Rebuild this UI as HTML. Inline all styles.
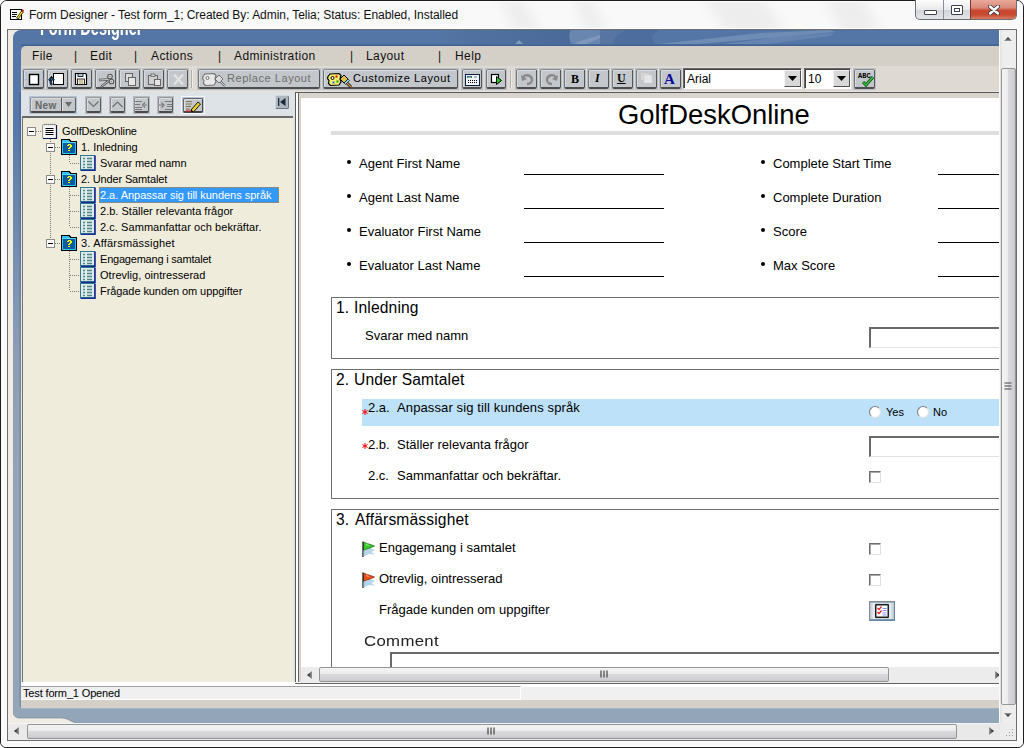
<!DOCTYPE html>
<html><head><meta charset="utf-8">
<style>
*{margin:0;padding:0;box-sizing:border-box}
html,body{width:1024px;height:748px;overflow:hidden;background:#fff}
body{position:relative;font-family:"Liberation Sans",sans-serif;color:#000}
.a{position:absolute}
.t{position:absolute;white-space:pre;line-height:1}
</style></head><body>
<!-- window frame -->
<div class="a" id="win" style="left:0;top:0;width:1024px;height:748px;background:#f9f9f9;border:1px solid #1e1e1e;border-radius:7px 7px 6px 6px"></div>
<div class="a" style="left:1px;top:1px;width:1022px;height:746px;border:1px solid #fbfbfb;border-radius:6px 6px 5px 5px"></div>
<svg class="a" style="left:2px;top:2px" width="1020" height="26"><defs><filter id="bl" x="-50%" y="-50%" width="200%" height="200%"><feGaussianBlur stdDeviation="6"/></filter></defs><g filter="url(#bl)" fill="#e0e0e0" opacity="0.45"><path d="M495 -5 L520 -5 L540 31 L515 31Z"/><path d="M570 -5 L590 -5 L605 31 L585 31Z"/><path d="M700 -5 L760 -5 L785 31 L725 31Z"/><path d="M820 -5 L860 -5 L880 31 L840 31Z"/></g></svg>
<!-- title icon -->
<svg class="a" style="left:10px;top:8px" width="14" height="13" viewBox="0 0 14 13"><rect x="0.5" y="1.5" width="11" height="10" fill="#fff" stroke="#000"/><path d="M2 4.5h5M2 6.5h5M2 8.5h4" stroke="#000" stroke-width="1"/><path d="M6.5 10 L11.5 3 L13.2 4.2 L8.2 11 Z" fill="#f5e400" stroke="#000" stroke-width="0.7"/><path d="M11.5 3 L12.6 1.3 L14 2.4 L13.2 4.2Z" fill="#c01010"/></svg>
<div class="t" style="left:29px;top:9px;font-size:12px;color:#111;letter-spacing:-0.05px">Form Designer - Test form_1; Created By: Admin, Telia; Status: Enabled, Installed</div>
<!-- caption buttons -->
<div class="a" style="left:915px;top:0;width:102px;height:20px;border:1px solid #6b6f78;border-top:none;border-radius:0 0 5px 5px;overflow:hidden;background:linear-gradient(#fdfdfd,#e9e9ec 50%,#d3d5da 51%,#e1e3e7)">
  <div class="a" style="left:27px;top:0;width:1px;height:19px;background:#8a8e96"></div>
  <div class="a" style="left:54px;top:0;width:47px;height:19px;background:linear-gradient(#e9a89c,#dc8a7a 40%,#c84a30 55%,#c6472e 75%,#d77a5e);border-left:1px solid #7b3a30"></div>
  <div class="a" style="left:8px;top:10px;width:13px;height:5px;border:1px solid #3e4350;border-radius:1px;background:#fff"></div>
  <div class="a" style="left:35px;top:5px;width:12px;height:10px;border:1px solid #3e4350;border-radius:1px;background:#fff"></div>
  <div class="a" style="left:38px;top:8px;width:6px;height:4px;border:1px solid #3e4350;background:#fff"></div>
  <svg class="a" style="left:72px;top:5px" width="12" height="10" viewBox="0 0 12 10"><path d="M2 1.5 L10 8.5 M10 1.5 L2 8.5" stroke="#3a3a48" stroke-width="4.2" stroke-linecap="round"/><path d="M2 1.5 L10 8.5 M10 1.5 L2 8.5" stroke="#fff" stroke-width="2.4" stroke-linecap="round"/></svg>
</div>
<!-- client frame -->
<div class="a" style="left:7px;top:28px;width:1011px;height:1px;background:#fff"></div>
<div class="a" style="left:7px;top:29px;width:1010px;height:712px;border:1px solid #6d6d6d;background:#f0ece4"></div>

<!-- blue panel -->
<div class="a" id="bluepanel" style="left:13px;top:30px;width:986px;height:693px;background:linear-gradient(#5476a6 0px,#5677a8 90px,#6a86ab 170px,#8c9db5 320px,#93a5b9 470px);border-radius:8px 0 0 0"></div>
<svg class="a" style="left:13px;top:708px" width="70" height="15" viewBox="0 0 70 15"><path d="M0 4 A6 6 0 0 0 6 10 L48 10 C56 10 58 15 66 15 L70 15 L70 16 L0 16 Z" fill="#f0ece4"/><path d="M0 4 A6 6 0 0 0 6 10 L48 10 C56 10 58 15 66 15" fill="none" stroke="#7d8b9c" stroke-width="1" opacity="0.7"/></svg>
<div class="a" style="left:36px;top:30px;width:130px;height:10px;overflow:hidden"><div class="t" style="left:4px;top:-12.6px;font-size:22px;font-weight:bold;color:#fff;transform:scaleX(0.66);transform-origin:0 0">Form Designer</div></div>

<div class="a" style="left:19px;top:92px;width:2px;height:615px;background:linear-gradient(90deg,rgba(20,30,60,0.08),rgba(20,30,60,0.2))"></div>
<svg class="a" style="left:430px;top:30px" width="410" height="15" viewBox="-70 0 410 15"><defs><linearGradient id="dk" x1="0" x2="1"><stop offset="0" stop-color="#000" stop-opacity="0"/><stop offset="1" stop-color="#001040" stop-opacity="0.12"/></linearGradient></defs><rect x="-70" y="0" width="140" height="15" fill="url(#dk)"/><path d="M100 0 L160 0 C150 5 150 10 158 15 L100 15Z" fill="#001040" opacity="0.08"/><path d="M14 15 L19 10 L24 15Z" fill="#fff" opacity="0.3"/><path d="M71 0 C67 5 69 12 74 15 L100 15 L100 0Z" fill="#fff" opacity="0.12"/><path d="M74 13 L100 5 L100 8 L84 15Z" fill="#fff" opacity="0.15"/><path d="M100 0 L125 0 C115 6 112 10 115 15 L100 15Z" fill="#fff" opacity="0.06"/><path d="M150 15 L260 3 L330 0 L335 2 L270 8 L185 15Z" fill="#fff" opacity="0.16"/><path d="M215 15 L290 6 L335 3 L330 6 L260 15Z" fill="#fff" opacity="0.1"/></svg>
<!-- menu bar -->
<div class="a" style="left:21px;top:44px;width:978px;height:2px;background:linear-gradient(#4d6d9f,#3f5f90)"></div>
<div class="a" style="left:21px;top:46px;width:978px;height:20px;background:#d4d0c8;border-radius:5px 0 0 0"></div>
<div class="a" id="menu" style="left:21px;top:50px;font-size:12px;letter-spacing:0.4px;color:#111">
<span class="t" style="left:11px">File</span><span class="t" style="left:53px">|</span>
<span class="t" style="left:69px">Edit</span><span class="t" style="left:113px">|</span>
<span class="t" style="left:130px">Actions</span><span class="t" style="left:197px">|</span>
<span class="t" style="left:213px">Administration</span><span class="t" style="left:329px">|</span>
<span class="t" style="left:345px">Layout</span><span class="t" style="left:417px">|</span>
<span class="t" style="left:434px">Help</span>
</div>
<!-- toolbar -->
<div class="a" style="left:21px;top:66px;width:978px;height:26px;background:linear-gradient(#dedad3,#dedad3 25px,#e6e3dd 25px)"></div>
<style>
.b{position:absolute;top:68px;width:23px;height:22px;border:1px solid #b7bfc7}
.b>i{position:absolute;left:0;top:0;right:0;bottom:0;border:1px solid #6c6c6c;border-color:#8a8a8a #555 #4e4e4e #777;border-bottom-width:2px;border-radius:2px;background:#c3c7cb;box-shadow:inset 1px 1px 0 #d9dcdf}
.b>svg{position:absolute;left:2px;top:2px}
.sep{position:absolute;top:70px;width:2px;height:18px;border-left:1px solid #b4b2ac;border-right:1px solid #ecebe6}
</style>
<div class="b" style="left:22px"><i></i><svg style="left:0px" width="22" height="19" viewBox="0 0 22 19"><rect x="6.5" y="3.5" width="9" height="10" fill="#fff" stroke="#000" stroke-width="1.4"/><path d="M2 1l2.5 2.5M1.5 8.5h3M2 16l2.5-2.5M20 1l-2.5 2.5M20.5 8.5h-3M20 16l-2.5-2.5" stroke="#9cc0e8" stroke-width="1"/></svg></div>
<div class="b" style="left:46px"><i></i><svg style="left:0px" width="19" height="17" viewBox="0 0 19 17"><rect x="6.5" y="2.5" width="10" height="11" fill="#fff" stroke="#000"/><path d="M5 14 C3 12 4 9 4.5 8 M2 9.5 L4.5 6.5 L7 9.5" fill="none" stroke="#000" stroke-width="2"/><path d="M5 14 C3 12 4 9 4.5 8 M2.5 9 L4.5 7 L6.5 9" fill="none" stroke="#1a6fb0" stroke-width="1"/></svg></div>
<div class="b" style="left:70px"><i></i><svg style="left:0px" width="19" height="17" viewBox="0 0 19 17"><path d="M4.5 2.5h10l1 1v10h-11z" fill="#fff" stroke="#000" stroke-width="1.2"/><rect x="7" y="2.5" width="5" height="3" fill="#a8c8e0" stroke="#000" stroke-width="0.8"/><rect x="6.5" y="8" width="7" height="5.5" fill="#f0ead0" stroke="#000" stroke-width="0.8"/><path d="M8 10h4M8 12h4" stroke="#9a8a50" stroke-width="0.8"/></svg></div>
<div class="b" style="left:94px"><i></i><svg width="19" height="17" viewBox="0 0 19 17"><path d="M2 9 L11 8.5 M4 16 L12 9.5" stroke="#5a5a5a" stroke-width="2.4"/><path d="M2.5 9 L11 8.5 M4.5 15.5 L12 9.5" stroke="#d8d8d8" stroke-width="0.9"/><circle cx="13" cy="5.5" r="2.3" fill="#dcdcdc" stroke="#5a5a5a" stroke-width="1.1"/><circle cx="14.5" cy="10.5" r="2.3" fill="#dcdcdc" stroke="#5a5a5a" stroke-width="1.1"/><circle cx="13" cy="5.5" r="0.8" fill="#8a8a8a"/><circle cx="14.5" cy="10.5" r="0.8" fill="#8a8a8a"/></svg></div>
<div class="b" style="left:118px"><i></i><svg width="19" height="17" viewBox="0 0 19 17"><rect x="4.5" y="2.5" width="7" height="8" fill="#d8d8d8" stroke="#666"/><rect x="7.5" y="6.5" width="7" height="8" fill="#e6e6e6" stroke="#666"/></svg></div>
<div class="b" style="left:142px"><i></i><svg width="19" height="17" viewBox="0 0 19 17"><rect x="3.5" y="4.5" width="9" height="9" fill="#d0d0d0" stroke="#666"/><rect x="6" y="3" width="4" height="2.5" fill="#d0d0d0" stroke="#666" stroke-width="0.8"/><rect x="9.5" y="8.5" width="6" height="6" fill="#e6e6e6" stroke="#666"/></svg></div>
<div class="b" style="left:166px"><i></i><svg width="19" height="17" viewBox="0 0 19 17"><path d="M5 3.5 L14 13.5 M14 3.5 L5 13.5" stroke="#e2e2e2" stroke-width="2.4"/></svg></div>
<div class="sep" style="left:191px"></div>
<div class="b" style="left:197px;width:124px"><i></i><svg width="26" height="16" viewBox="0 0 26 16" style="left:3px;top:3px"><path d="M2 4.5 L4 2 L13 1.5 L15 3.5 L14 7 L15 10 L13 13 L4.5 13.5 L2.5 11.5 L3 8.5 L1.5 6.5 Z" fill="#e8e8e8" stroke="#707070" stroke-width="1.1"/><circle cx="6.5" cy="6" r="1.5" fill="#fff" stroke="#707070" stroke-width="1"/><path d="M14 7 L18 3 L22 7 L18 11 Z" fill="#dcdcdc" stroke="#707070" stroke-width="1"/><path d="M19.5 9.5 L24 14" stroke="#707070" stroke-width="2.2"/><path d="M19.5 9.5 L24 14" stroke="#d8d8d8" stroke-width="0.9"/></svg><span class="t" style="left:29px;top:4px;font-size:11px;letter-spacing:0.55px;color:#6e6e6e">Replace Layout</span></div>
<div class="b" style="left:322px;width:137px"><i></i><svg width="26" height="16" viewBox="0 0 26 16" style="left:3px;top:3px"><path d="M2 4.5 L4 2 L13 1.5 L15 3.5 L14 7 L15 10 L13 13 L4.5 13.5 L2.5 11.5 L3 8.5 L1.5 6.5 Z" fill="#f6ec6a" stroke="#000" stroke-width="1.2"/><circle cx="6.5" cy="6" r="1.5" fill="#fff" stroke="#000" stroke-width="1"/><rect x="9.5" y="3.5" width="2" height="2" fill="#e00000"/><rect x="10.5" y="8.5" width="2" height="2" fill="#00a000"/><rect x="6.5" y="9.5" width="2" height="2" fill="#2070f0"/><path d="M14 7 L18 3 L22 7 L18 11 Z" fill="#e0c040" stroke="#000" stroke-width="1"/><path d="M18 11 L22 7 L23.5 8.5 L19.5 12.5Z" fill="#80d0f0" stroke="#000" stroke-width="0.6"/><path d="M21 11 L25 15" stroke="#000" stroke-width="2.6"/><path d="M21 11 L25 15" stroke="#d09040" stroke-width="1.4"/></svg><span class="t" style="left:30px;top:4px;font-size:11px;letter-spacing:0.6px;color:#000">Customize Layout</span></div>
<div class="b" style="left:461px;width:22px"><i></i><svg width="18" height="17" viewBox="0 0 18 17" shape-rendering="crispEdges"><rect x="1.5" y="3.5" width="14" height="11" rx="1" fill="#f0f4f8" stroke="#102040"/><rect x="3" y="5" width="5" height="2" fill="#3a6ab0"/><rect x="4" y="5.5" width="3" height="1" fill="#80d070"/><rect x="10" y="5" width="3" height="2" fill="#a8b8d0"/><g fill="#000"><rect x="4" y="9" width="1" height="1"/><rect x="6" y="9" width="1" height="1"/><rect x="8" y="9" width="1" height="1"/><rect x="10" y="9" width="1" height="1"/><rect x="12" y="9" width="1" height="1"/><rect x="4" y="11" width="1" height="1"/><rect x="6" y="11" width="1" height="1"/><rect x="8" y="11" width="1" height="1"/><rect x="10" y="11" width="1" height="1"/><rect x="12" y="11" width="1" height="1"/></g></svg></div>
<div class="b" style="left:485px;width:22px"><i></i><svg width="18" height="17" viewBox="0 0 18 17"><rect x="3.5" y="3.5" width="7" height="8" fill="#fff" stroke="#000" stroke-width="1.2"/><path d="M8.5 5.5 L13.5 9.5 L8.5 13.5Z" fill="#10d010" stroke="#000" stroke-width="1"/></svg></div>
<div class="sep" style="left:510px"></div>
<div class="b" style="left:515px"><i></i><svg width="19" height="17" viewBox="0 0 19 17"><path d="M5 6 C8 3 14 4 14 9 C14 12 11 13 9 13" fill="none" stroke="#8a8a8a" stroke-width="2.4"/><path d="M3 4 L4 10 L9 8Z" fill="#8a8a8a"/></svg></div>
<div class="b" style="left:539px"><i></i><svg width="19" height="17" viewBox="0 0 19 17"><path d="M14 6 C11 3 5 4 5 9 C5 12 8 13 10 13" fill="none" stroke="#8a8a8a" stroke-width="2.4"/><path d="M16 4 L15 10 L10 8Z" fill="#8a8a8a"/></svg></div>
<div class="b" style="left:563px"><i></i><span class="t" style="left:7px;top:3px;font:bold 12px 'Liberation Serif',serif">B</span></div>
<div class="b" style="left:587px"><i></i><span class="t" style="left:7px;top:2px;font:italic bold 12px 'Liberation Serif',serif">I</span></div>
<div class="b" style="left:611px"><i></i><span class="t" style="left:5px;top:2px;font:bold 12px 'Liberation Serif',serif;text-decoration:underline">U</span></div>
<div class="b" style="left:635px"><i></i><svg width="19" height="17" viewBox="0 0 19 17"><rect x="3" y="2" width="8" height="7" fill="#d6d6d6"/><rect x="6" y="4" width="8" height="8" fill="#e6e6e6" stroke="#cfcfcf" stroke-width="0.5"/></svg></div>
<div class="b" style="left:659px"><i></i><span class="t" style="left:4px;top:2px;font:bold 15px 'Liberation Serif',serif;color:#0a0a9a">A</span></div>
<!-- font combo -->
<div class="a" style="left:683px;top:68px;width:119px;height:21px;background:#fff;border:1px solid;border-color:#6a6a6a #fff #fff #6a6a6a;box-shadow:inset 1px 1px 0 #404040"></div>
<span class="t" style="left:687px;top:73px;font-size:12px">Arial</span>
<div class="a" style="left:784px;top:70px;width:17px;height:17px;background:#d8d8d8;border:1px solid;border-color:#f4f4f4 #505050 #505050 #f4f4f4"></div>
<svg class="a" style="left:788px;top:76px" width="9" height="5"><path d="M0 0h9L4.5 5z" fill="#000"/></svg>
<div class="a" style="left:804px;top:68px;width:47px;height:21px;background:#fff;border:1px solid;border-color:#6a6a6a #fff #fff #6a6a6a;box-shadow:inset 1px 1px 0 #404040"></div>
<span class="t" style="left:808px;top:73px;font-size:12px">10</span>
<div class="a" style="left:833px;top:70px;width:17px;height:17px;background:#d8d8d8;border:1px solid;border-color:#f4f4f4 #505050 #505050 #f4f4f4"></div>
<svg class="a" style="left:837px;top:76px" width="9" height="5"><path d="M0 0h9L4.5 5z" fill="#000"/></svg>
<div class="b" style="left:853px"><i></i><svg width="19" height="17" viewBox="0 0 19 17"><text x="2" y="7" font-family="Liberation Mono" font-weight="bold" font-size="7" fill="#000">ABC</text><path d="M7 11 L10 14 L17 6" fill="none" stroke="#104010" stroke-width="3"/><path d="M7 11 L10 14 L17 6" fill="none" stroke="#30c040" stroke-width="1.6"/></svg></div>


<!-- left pane -->
<div class="a" style="left:21px;top:92px;width:274px;height:592px;background:#dee3e7"></div>
<div class="a" style="left:22px;top:116px;width:271px;height:566px;background:#f0ecdc;border-top:2px solid #6a6a6a;border-left:1px solid #747474"></div>
<style>
.pb{position:absolute;border:1px solid #6a6a6a;border-color:#9a9a9a #5a5a5a #4a4a4a #8a8a8a;border-bottom-width:2px;border-radius:2px;background:#c3c7cb;box-shadow:inset 1px 1px 0 #dadde0}
</style>
<div class="a" style="left:29px;top:96px;width:48px;height:18px;background:#b4c4d4"></div>
<div class="pb" style="left:30px;top:97px;width:46px;height:16px"></div>
<div class="a" style="left:61px;top:98px;width:2px;height:13px;border-left:1px solid #555;border-right:1px solid #e0e0e0"></div>
<span class="t" style="left:35px;top:100px;font:bold 10px 'Liberation Sans',sans-serif;color:#666;letter-spacing:0.3px">New</span>
<svg class="a" style="left:65px;top:102px" width="7" height="5"><path d="M0 0h7L3.5 5z" fill="#6a6a6a"/></svg>
<div class="a" style="left:85px;top:96px;width:17px;height:18px;background:#b8bcc0"></div>
<div class="pb" style="left:86px;top:97px;width:15px;height:16px"></div>
<svg class="a" style="left:88px;top:101px" width="11" height="7"><path d="M0.5 0.5L5.5 5.5L10.5 0.5" fill="none" stroke="#707070" stroke-width="1.2"/></svg>
<div class="a" style="left:109px;top:96px;width:17px;height:18px;background:#b8bcc0"></div>
<div class="pb" style="left:110px;top:97px;width:15px;height:16px"></div>
<svg class="a" style="left:112px;top:101px" width="11" height="7"><path d="M0.5 6L5.5 1L10.5 6" fill="none" stroke="#707070" stroke-width="1.2"/></svg>
<div class="a" style="left:133px;top:96px;width:17px;height:18px;background:#b8bcc0"></div>
<div class="pb" style="left:134px;top:97px;width:15px;height:16px"></div>
<svg class="a" style="left:135px;top:100px" width="13" height="10"><path d="M0 1.5h7M0 4.5h5M0 7.5h7M0 9.5h7" stroke="#7a7a7a"/><path d="M12 5h-3M10 2.5L7.5 5L10 7.5" fill="none" stroke="#7a7a7a" stroke-width="1.2"/></svg>
<div class="a" style="left:157px;top:96px;width:17px;height:18px;background:#b8bcc0"></div>
<div class="pb" style="left:158px;top:97px;width:15px;height:16px"></div>
<svg class="a" style="left:159px;top:100px" width="13" height="10"><path d="M6 1.5h7M8 4.5h5M8 6.5h5M6 9.5h7" stroke="#7a7a7a"/><path d="M0 5h4M2.5 2.5L5 5L2.5 7.5" fill="none" stroke="#7a7a7a" stroke-width="1.2"/></svg>
<div class="a" style="left:181px;top:96px;width:24px;height:18px;background:#b4c4d4;border:1px solid #f4f8fc"></div>
<div class="pb" style="left:183px;top:98px;width:20px;height:15px;border-color:#666 #444 #444 #666"></div>
<svg class="a" style="left:185px;top:99px" width="17" height="13" viewBox="0 0 17 13"><path d="M1 2.5h6M1 5h6M1 7.5h5M1 10h4" stroke="#8a7a50" stroke-width="1"/><path d="M1 12h5" stroke="#e02020" stroke-width="1.2"/><path d="M6 11 L13 3 L15.5 5 L8.5 13 Z" fill="#f0d030" stroke="#000" stroke-width="0.9"/><path d="M6 11 L6.5 13 L8.5 13Z" fill="#000"/></svg>
<div class="a" style="left:275px;top:95px;width:14px;height:14px;background:#aeb6be;border:1px solid;border-color:#d0d6dc #6a727a #6a727a #d0d6dc;border-radius:2px 3px 2px 2px"></div>
<svg class="a" style="left:278px;top:98px" width="8" height="8"><path d="M0.5 0v8" stroke="#1a2a3a" stroke-width="1.6"/><path d="M7.5 0L2 4L7.5 8z" fill="#1a2a3a"/></svg>

<style>
.mb{position:absolute;width:9px;height:9px;border:1px solid #8c8c8c;background:#fcfcfc}
.mb:after{content:"";position:absolute;left:1px;top:3px;width:5px;height:1px;background:#000}
.dh{position:absolute;height:1px;background-image:linear-gradient(90deg,#7c7c7c 50%,transparent 50%);background-size:2px 1px}
.dv{position:absolute;width:1px;background-image:linear-gradient(#7c7c7c 50%,transparent 50%);background-size:1px 2px}
.tt{position:absolute;white-space:pre;line-height:1;font-size:11px;color:#000;letter-spacing:-0.15px}
</style>
<div class="dv" style="left:50px;top:139px;height:100px"></div>
<div class="dv" style="left:69px;top:155px;height:8px"></div>
<div class="dv" style="left:69px;top:187px;height:40px"></div>
<div class="dv" style="left:69px;top:251px;height:40px"></div>
<div class="mb" style="left:27px;top:127px"></div>
<div class="dh" style="left:36px;top:131px;width:6px"></div>
<svg class="a" style="left:42px;top:123px" width="16" height="16" viewBox="0 0 16 16"><rect x="0.5" y="1.5" width="14" height="14" rx="1.5" fill="#f6f6f6" stroke="#9a9a9a"/><path d="M14.5 2 V15.5 H1" fill="none" stroke="#0a1a4a" stroke-width="1.2"/><path d="M2 1.5h11" stroke="#888" stroke-width="1.6" stroke-dasharray="1 1"/><path d="M3.5 5.5h8M3.5 7.5h8M3.5 9.5h8M3.5 11.5h8" stroke="#000" stroke-width="1"/></svg>
<div class="tt" style="left:62px;top:126px;letter-spacing:-0.158px">GolfDeskOnline</div>
<div class="mb" style="left:46px;top:143px"></div>
<div class="dh" style="left:55px;top:147px;width:6px"></div>
<svg class="a" style="left:61px;top:139px" width="16" height="16" viewBox="0 0 16 16" shape-rendering="crispEdges"><path d="M0 0h8l2 2h6v14H0z" fill="#000"/><path d="M1 1h6.5l2 2H15v12H1z" fill="#2ec4f6"/><rect x="2" y="4" width="12" height="10" fill="#0a5c9c"/><rect x="1" y="3" width="14" height="1" fill="#5ad4fa"/><g fill="#ffff00"><rect x="7" y="5" width="1" height="1"/><rect x="8" y="5" width="1" height="1"/><rect x="9" y="5" width="1" height="1"/><rect x="6" y="6" width="1" height="1"/><rect x="7" y="6" width="1" height="1"/><rect x="9" y="6" width="1" height="1"/><rect x="10" y="6" width="1" height="1"/><rect x="9" y="7" width="1" height="1"/><rect x="10" y="7" width="1" height="1"/><rect x="8" y="8" width="1" height="1"/><rect x="9" y="8" width="1" height="1"/><rect x="7" y="9" width="1" height="1"/><rect x="8" y="9" width="1" height="1"/><rect x="7" y="11" width="1" height="1"/><rect x="8" y="11" width="1" height="1"/></g></svg>
<div class="tt" style="left:81px;top:142px;letter-spacing:-0.023px">1. Inledning</div>
<div class="dh" style="left:70px;top:163px;width:10px"></div>
<svg class="a" style="left:80px;top:155px" width="16" height="16" viewBox="0 0 16 16"><rect x="0.5" y="0.5" width="14" height="14" fill="#e2e8e6" stroke="#2a7a8a"/><path d="M15 0.5V15.5H0.5" fill="none" stroke="#1a2a9a" stroke-width="1.6"/><path d="M3 3.5h2M7 3.5h5M3 6.5h2M7 6.5h5M3 9.5h2M7 9.5h5M3 12.5h2M7 12.5h5" stroke="#4a8a8a" stroke-width="1.3"/></svg>
<div class="tt" style="left:100px;top:158px;letter-spacing:-0.064px">Svarar med namn</div>
<div class="mb" style="left:46px;top:175px"></div>
<div class="dh" style="left:55px;top:179px;width:6px"></div>
<svg class="a" style="left:61px;top:171px" width="16" height="16" viewBox="0 0 16 16" shape-rendering="crispEdges"><path d="M0 0h8l2 2h6v14H0z" fill="#000"/><path d="M1 1h6.5l2 2H15v12H1z" fill="#2ec4f6"/><rect x="2" y="4" width="12" height="10" fill="#0a5c9c"/><rect x="1" y="3" width="14" height="1" fill="#5ad4fa"/><g fill="#ffff00"><rect x="7" y="5" width="1" height="1"/><rect x="8" y="5" width="1" height="1"/><rect x="9" y="5" width="1" height="1"/><rect x="6" y="6" width="1" height="1"/><rect x="7" y="6" width="1" height="1"/><rect x="9" y="6" width="1" height="1"/><rect x="10" y="6" width="1" height="1"/><rect x="9" y="7" width="1" height="1"/><rect x="10" y="7" width="1" height="1"/><rect x="8" y="8" width="1" height="1"/><rect x="9" y="8" width="1" height="1"/><rect x="7" y="9" width="1" height="1"/><rect x="8" y="9" width="1" height="1"/><rect x="7" y="11" width="1" height="1"/><rect x="8" y="11" width="1" height="1"/></g></svg>
<div class="tt" style="left:81px;top:174px;letter-spacing:-0.15px">2. Under Samtalet</div>
<div class="dh" style="left:70px;top:195px;width:10px"></div>
<svg class="a" style="left:80px;top:187px" width="16" height="16" viewBox="0 0 16 16"><rect x="0.5" y="0.5" width="14" height="14" fill="#e2e8e6" stroke="#2a7a8a"/><path d="M15 0.5V15.5H0.5" fill="none" stroke="#1a2a9a" stroke-width="1.6"/><path d="M3 3.5h2M7 3.5h5M3 6.5h2M7 6.5h5M3 9.5h2M7 9.5h5M3 12.5h2M7 12.5h5" stroke="#4a8a8a" stroke-width="1.3"/></svg>
<div class="a" style="left:99px;top:187px;width:180px;height:16px;background:#3399ff;outline:1px dotted #d08020;outline-offset:-1px"></div>
<div class="tt" style="left:100px;top:190px;color:#fff;letter-spacing:-0.027px">2.a. Anpassar sig till kundens språk</div>
<div class="dh" style="left:70px;top:211px;width:10px"></div>
<svg class="a" style="left:80px;top:203px" width="16" height="16" viewBox="0 0 16 16"><rect x="0.5" y="0.5" width="14" height="14" fill="#e2e8e6" stroke="#2a7a8a"/><path d="M15 0.5V15.5H0.5" fill="none" stroke="#1a2a9a" stroke-width="1.6"/><path d="M3 3.5h2M7 3.5h5M3 6.5h2M7 6.5h5M3 9.5h2M7 9.5h5M3 12.5h2M7 12.5h5" stroke="#4a8a8a" stroke-width="1.3"/></svg>
<div class="tt" style="left:100px;top:206px;letter-spacing:0.018px">2.b. Ställer relevanta frågor</div>
<div class="dh" style="left:70px;top:227px;width:10px"></div>
<svg class="a" style="left:80px;top:219px" width="16" height="16" viewBox="0 0 16 16"><rect x="0.5" y="0.5" width="14" height="14" fill="#e2e8e6" stroke="#2a7a8a"/><path d="M15 0.5V15.5H0.5" fill="none" stroke="#1a2a9a" stroke-width="1.6"/><path d="M3 3.5h2M7 3.5h5M3 6.5h2M7 6.5h5M3 9.5h2M7 9.5h5M3 12.5h2M7 12.5h5" stroke="#4a8a8a" stroke-width="1.3"/></svg>
<div class="tt" style="left:100px;top:222px;letter-spacing:0.06px">2.c. Sammanfattar och bekräftar.</div>
<div class="mb" style="left:46px;top:239px"></div>
<div class="dh" style="left:55px;top:243px;width:6px"></div>
<svg class="a" style="left:61px;top:235px" width="16" height="16" viewBox="0 0 16 16" shape-rendering="crispEdges"><path d="M0 0h8l2 2h6v14H0z" fill="#000"/><path d="M1 1h6.5l2 2H15v12H1z" fill="#2ec4f6"/><rect x="2" y="4" width="12" height="10" fill="#0a5c9c"/><rect x="1" y="3" width="14" height="1" fill="#5ad4fa"/><g fill="#ffff00"><rect x="7" y="5" width="1" height="1"/><rect x="8" y="5" width="1" height="1"/><rect x="9" y="5" width="1" height="1"/><rect x="6" y="6" width="1" height="1"/><rect x="7" y="6" width="1" height="1"/><rect x="9" y="6" width="1" height="1"/><rect x="10" y="6" width="1" height="1"/><rect x="9" y="7" width="1" height="1"/><rect x="10" y="7" width="1" height="1"/><rect x="8" y="8" width="1" height="1"/><rect x="9" y="8" width="1" height="1"/><rect x="7" y="9" width="1" height="1"/><rect x="8" y="9" width="1" height="1"/><rect x="7" y="11" width="1" height="1"/><rect x="8" y="11" width="1" height="1"/></g></svg>
<div class="tt" style="left:81px;top:238px;letter-spacing:0.197px">3. Affärsmässighet</div>
<div class="dh" style="left:70px;top:259px;width:10px"></div>
<svg class="a" style="left:80px;top:251px" width="16" height="16" viewBox="0 0 16 16"><rect x="0.5" y="0.5" width="14" height="14" fill="#e2e8e6" stroke="#2a7a8a"/><path d="M15 0.5V15.5H0.5" fill="none" stroke="#1a2a9a" stroke-width="1.6"/><path d="M3 3.5h2M7 3.5h5M3 6.5h2M7 6.5h5M3 9.5h2M7 9.5h5M3 12.5h2M7 12.5h5" stroke="#4a8a8a" stroke-width="1.3"/></svg>
<div class="tt" style="left:100px;top:254px;letter-spacing:-0.21px">Engagemang i samtalet</div>
<div class="dh" style="left:70px;top:275px;width:10px"></div>
<svg class="a" style="left:80px;top:267px" width="16" height="16" viewBox="0 0 16 16"><rect x="0.5" y="0.5" width="14" height="14" fill="#e2e8e6" stroke="#2a7a8a"/><path d="M15 0.5V15.5H0.5" fill="none" stroke="#1a2a9a" stroke-width="1.6"/><path d="M3 3.5h2M7 3.5h5M3 6.5h2M7 6.5h5M3 9.5h2M7 9.5h5M3 12.5h2M7 12.5h5" stroke="#4a8a8a" stroke-width="1.3"/></svg>
<div class="tt" style="left:100px;top:270px;letter-spacing:0.04px">Otrevlig, ointresserad</div>
<div class="dh" style="left:70px;top:291px;width:10px"></div>
<svg class="a" style="left:80px;top:283px" width="16" height="16" viewBox="0 0 16 16"><rect x="0.5" y="0.5" width="14" height="14" fill="#e2e8e6" stroke="#2a7a8a"/><path d="M15 0.5V15.5H0.5" fill="none" stroke="#1a2a9a" stroke-width="1.6"/><path d="M3 3.5h2M7 3.5h5M3 6.5h2M7 6.5h5M3 9.5h2M7 9.5h5M3 12.5h2M7 12.5h5" stroke="#4a8a8a" stroke-width="1.3"/></svg>
<div class="tt" style="left:100px;top:286px;letter-spacing:-0.077px">Frågade kunden om uppgifter</div>
<!-- form pane -->
<div class="a" style="left:295px;top:92px;width:704px;height:592px;background:#d8d4cc;border-top:1px solid #5a5a5a;border-left:1px solid #5a5a5a"></div>
<div class="a" style="left:296px;top:93px;width:2px;height:591px;background:#fff"></div>
<div class="a" style="left:298px;top:93px;width:1px;height:591px;background:#666"></div>
<div class="a" id="form" style="left:301px;top:98px;width:698px;height:569px;background:#fff;overflow:hidden"><style>
.ft{position:absolute;white-space:pre;line-height:1;font-size:13px;color:#000}
.bul{position:absolute;width:4px;height:4px;border-radius:50%;background:#000}
.ul{position:absolute;height:1px;background:#000}
.sec{position:absolute;left:331px;width:720px;border:1px solid #707070}
.st{position:absolute;white-space:pre;line-height:1;font-size:15.6px;color:#000;letter-spacing:0.15px}
.tb{position:absolute;left:869px;width:200px;height:21px;border-top:2px solid #6a6a6a;border-left:2px solid #6a6a6a;border-bottom:1px solid #e2e2e2;background:#fff}
.cb{position:absolute;left:869px;width:12px;height:12px;border:1px solid;border-color:#6e6e6e #e0e0e0 #e0e0e0 #6e6e6e;box-shadow:inset 1px 1px 0 #a8a8a8;background:#fff}
.rd{position:absolute;width:12px;height:12px;border-radius:50%;border:1px solid;border-color:#7a7a7a #e4e4e4 #e4e4e4 #7a7a7a;transform:rotate(0deg);background:#fff}
.ast{position:absolute;left:362px;width:6px;height:6px}
</style>
<div class="a" style="left:-301px;top:-98px;width:1024px;height:748px">
<div class="t" style="left:618px;top:100.5px;font-size:27.4px;color:#000">GolfDeskOnline</div>
<div class="a" style="left:331px;top:131px;width:700px;height:4px;background:#dedede"></div>

<div class="bul" style="left:347px;top:160px"></div><div class="ft" style="left:359px;top:157px">Agent First Name</div><div class="ul" style="left:524px;top:174px;width:140px"></div>
<div class="bul" style="left:347px;top:194px"></div><div class="ft" style="left:359px;top:191px">Agent Last Name</div><div class="ul" style="left:524px;top:208px;width:140px"></div>
<div class="bul" style="left:347px;top:228px"></div><div class="ft" style="left:359px;top:225px">Evaluator First Name</div><div class="ul" style="left:524px;top:242px;width:140px"></div>
<div class="bul" style="left:347px;top:262px"></div><div class="ft" style="left:359px;top:259px">Evaluator Last Name</div><div class="ul" style="left:524px;top:276px;width:140px"></div>

<div class="bul" style="left:761px;top:160px"></div><div class="ft" style="left:773px;top:157px">Complete Start Time</div><div class="ul" style="left:938px;top:174px;width:140px"></div>
<div class="bul" style="left:761px;top:194px"></div><div class="ft" style="left:773px;top:191px">Complete Duration</div><div class="ul" style="left:938px;top:208px;width:140px"></div>
<div class="bul" style="left:761px;top:228px"></div><div class="ft" style="left:773px;top:225px">Score</div><div class="ul" style="left:938px;top:242px;width:140px"></div>
<div class="bul" style="left:761px;top:262px"></div><div class="ft" style="left:773px;top:259px">Max Score</div><div class="ul" style="left:938px;top:276px;width:140px"></div>

<!-- section 1 -->
<div class="sec" style="top:297px;height:62px"></div>
<div class="st" style="left:336px;top:300px">1.</div><div class="st" style="left:354px;top:300px">Inledning</div>
<div class="ft" style="left:365px;top:329px">Svarar med namn</div>
<div class="tb" style="top:327px"></div>

<!-- section 2 -->
<div class="sec" style="top:369px;height:130px"></div>
<div class="st" style="left:336px;top:372px">2.</div><div class="st" style="left:354px;top:372px">Under Samtalet</div>
<div class="a" style="left:362px;top:399px;width:700px;height:27px;background:#bde1f8"></div>
<svg class="ast" style="top:409px" viewBox="0 0 6 6"><path d="M3 0v6M0.4 1.5l5.2 3M0.4 4.5l5.2-3" stroke="#f00" stroke-width="1"/></svg>
<div class="ft" style="left:368px;top:401px">2.a.</div><div class="ft" style="left:397px;top:401px;letter-spacing:0.12px">Anpassar sig till kundens språk</div>
<div class="rd" style="left:869px;top:406px"></div><div class="t" style="left:886px;top:407px;font-size:11px">Yes</div>
<div class="rd" style="left:917px;top:406px"></div><div class="t" style="left:933px;top:407px;font-size:11px">No</div>
<svg class="ast" style="top:443px" viewBox="0 0 6 6"><path d="M3 0v6M0.4 1.5l5.2 3M0.4 4.5l5.2-3" stroke="#f00" stroke-width="1"/></svg>
<div class="ft" style="left:368px;top:438px">2.b.</div><div class="ft" style="left:397px;top:438px">Ställer relevanta frågor</div>
<div class="tb" style="top:436px"></div>
<div class="ft" style="left:368px;top:469px">2.c.</div><div class="ft" style="left:397px;top:469px">Sammanfattar och bekräftar.</div>
<div class="cb" style="top:471px"></div>

<!-- section 3 -->
<div class="sec" style="top:509px;height:300px"></div>
<div class="st" style="left:336px;top:512px">3.</div><div class="st" style="left:355px;top:512px">Affärsmässighet</div>
<svg class="a" style="left:362px;top:541px" width="14" height="16" viewBox="0 0 14 16"><path d="M1.5 9 L6 6.5 L13 9 L9.5 11 L13 13.5 L7 13 L1.5 15.5Z" fill="#b8d6ea"/><path d="M1.5 1 C3.5 1.5 5 3 7 3 L12.5 5 L8 7 C5.5 7.5 3.5 8.5 1.5 9.5Z" fill="#38c828" stroke="#186818" stroke-width="0.7"/><path d="M4 3.5 L7 4.5" stroke="#a0f090" stroke-width="1"/><path d="M1 0.5V16" stroke="#101010" stroke-width="1.2"/><path d="M2 9V15" stroke="#88c8e0" stroke-width="0.8"/></svg>
<div class="ft" style="left:379px;top:541px">Engagemang i samtalet</div>
<div class="cb" style="top:543px"></div>
<svg class="a" style="left:362px;top:572px" width="14" height="16" viewBox="0 0 14 16"><path d="M1.5 9 L6 6.5 L13 9 L9.5 11 L13 13.5 L7 13 L1.5 15.5Z" fill="#b8d6ea"/><path d="M1.5 1 C3.5 1.5 5 3 7 3 L12.5 5 L8 7 C5.5 7.5 3.5 8.5 1.5 9.5Z" fill="#e8501a" stroke="#8a2000" stroke-width="0.7"/><path d="M4 3.5 L7 4.5" stroke="#ffa080" stroke-width="1"/><path d="M1 0.5V16" stroke="#101010" stroke-width="1.2"/><path d="M2 9V15" stroke="#88c8e0" stroke-width="0.8"/></svg>
<div class="ft" style="left:379px;top:572px">Otrevlig, ointresserad</div>
<div class="cb" style="top:574px"></div>
<div class="ft" style="left:379px;top:603px">Frågade kunden om uppgifter</div>
<div class="a" style="left:869px;top:601px;width:26px;height:20px;background:linear-gradient(90deg,#b8c4d0,#e6ecf0 15%,#c8d0d8 30%,#d8dee4 50%,#c8d0d8 70%,#e6ecf0 85%,#b8c4d0);border:1px solid;border-color:#8a8a8a #6a88aa #6a88aa #8a8a8a;box-shadow:inset 0 -1px 0 #7a98b8,inset 0 1px 0 #9ab0c8"></div>
<svg class="a" style="left:874px;top:603px" width="16" height="16" viewBox="0 0 16 16"><rect x="1" y="1" width="14" height="14" rx="1" fill="#202020"/><rect x="2.5" y="2.5" width="11" height="11" fill="#fff"/><path d="M3.5 5l1.5 1.5 2.5-3M3.5 9l1.5 1.5 2.5-3" fill="none" stroke="#e02020" stroke-width="1.2"/><path d="M8.5 5.5h4M8.5 7.5h4M8.5 10h4M8.5 12h4" stroke="#8080e0" stroke-width="0.9"/></svg>
<div class="t" style="left:364px;top:632.6px;font-size:15.4px;letter-spacing:0.3px;color:#222;transform:scaleX(1.09);transform-origin:0 0">Comment</div>
<div class="a" style="left:390px;top:652px;width:700px;height:60px;border-top:2px solid #6a6a6a;border-left:2px solid #6a6a6a"></div>
</div>
</div>
<div id="fsb"></div>

<!-- status bar -->
<div class="a" style="left:21px;top:682px;width:978px;height:18px;background:#f0f0f0;border-top:4px solid #fff"></div>
<div class="a" style="left:21px;top:686px;width:500px;height:14px;border-top:1px solid #a0a0a0;border-right:1px solid #fff;border-bottom:1px solid #fff"></div><div class="a" style="left:521px;top:686px;width:478px;height:1px;background:#fff"></div>
<div class="t" style="left:23px;top:688px;font-size:11px;color:#000;letter-spacing:-0.15px">Test form_1 Opened</div>
<div class="a" style="left:21px;top:700px;width:978px;height:8px;background:#d4d0c8"></div><div class="a" style="left:21px;top:708px;width:978px;height:1px;background:#a3b3c5"></div>

<!-- window scrollbars -->
<svg width="0" height="0" style="position:absolute"><defs><linearGradient id="gL" x1="0" x2="1" y1="0" y2="0"><stop offset="0" stop-color="#111"/><stop offset="1" stop-color="#9a9a9a"/></linearGradient><linearGradient id="gR" x1="1" x2="0" y1="0" y2="0"><stop offset="0" stop-color="#111"/><stop offset="1" stop-color="#9a9a9a"/></linearGradient><linearGradient id="gU" x1="0" x2="0" y1="0" y2="1"><stop offset="0" stop-color="#111"/><stop offset="1" stop-color="#9a9a9a"/></linearGradient><linearGradient id="gD" x1="0" x2="0" y1="1" y2="0"><stop offset="0" stop-color="#111"/><stop offset="1" stop-color="#9a9a9a"/></linearGradient></defs></svg>
<style>
.thh{position:absolute;border:1px solid #959595;border-radius:2px;background:linear-gradient(#f3f3f3,#ececec 45%,#dadadc 50%,#cfcfd3 90%,#c6c6ca)}
.thv{position:absolute;border:1px solid #959595;border-radius:2px;background:linear-gradient(90deg,#f3f3f3,#ececec 45%,#dadadc 50%,#cfcfd3 90%,#c6c6ca)}
</style>
<!-- form h scrollbar -->
<div class="a" style="left:301px;top:667px;width:698px;height:16px;background:#ececec"></div>
<svg class="a" style="left:307px;top:671px" width="5" height="8"><path d="M5 0V8L0 4z" fill="url(#gL)"/></svg>
<div class="thh" style="left:319px;top:667px;width:570px;height:15px"></div>
<svg class="a" style="left:600px;top:670px" width="8" height="8"><path d="M1 0.5v7M4 0.5v7M7 0.5v7" stroke="#444" stroke-width="1.2"/></svg>
<svg class="a" style="left:995px;top:671px" width="5" height="8"><path d="M0 0V8L5 4z" fill="url(#gR)"/></svg>
<div class="a" style="left:295px;top:683px;width:704px;height:1px;background:#646464"></div>
<!-- window v scrollbar -->
<div class="a" style="left:999px;top:30px;width:17px;height:693px;background:linear-gradient(90deg,#fafafa 1px,#e0e0e0 1px,#ececec 3px,#efefef 8px,#ececec);"></div>
<svg class="a" style="left:1004px;top:37px" width="8" height="4"><path d="M0 4H8L4 0z" fill="url(#gU)"/></svg>
<div class="thv" style="left:1001px;top:68px;width:15px;height:637px"></div>
<svg class="a" style="left:1004px;top:382px" width="8" height="8"><path d="M0.5 1h7M0.5 4h7M0.5 7h7" stroke="#444" stroke-width="1.2"/></svg>
<svg class="a" style="left:1004px;top:713px" width="8" height="4"><path d="M0 0H8L4 4z" fill="url(#gD)"/></svg>
<!-- window h scrollbar -->
<div class="a" style="left:8px;top:723px;width:992px;height:17px;background:#e9e9e9;border-top:1px solid #f4f4f4"></div>
<svg class="a" style="left:14px;top:727px" width="5" height="8"><path d="M5 0V8L0 4z" fill="url(#gL)"/></svg>
<div class="thh" style="left:27px;top:724px;width:930px;height:15px"></div>
<svg class="a" style="left:487px;top:727px" width="8" height="8"><path d="M1 0.5v7M4 0.5v7M7 0.5v7" stroke="#444" stroke-width="1.2"/></svg>
<svg class="a" style="left:989px;top:727px" width="5" height="8"><path d="M0 0V8L5 4z" fill="url(#gR)"/></svg>
<!-- size grip -->
<div class="a" style="left:1000px;top:723px;width:16px;height:17px;background:#ececec"></div>
<svg class="a" style="left:1004px;top:728px" width="10" height="10"><path d="M8 1h1v1h-1zM5 4h1v1h-1zM8 4h1v1h-1zM2 7h1v1h-1zM5 7h1v1h-1zM8 7h1v1h-1z" fill="#9a9a9a"/></svg>

</body></html>
